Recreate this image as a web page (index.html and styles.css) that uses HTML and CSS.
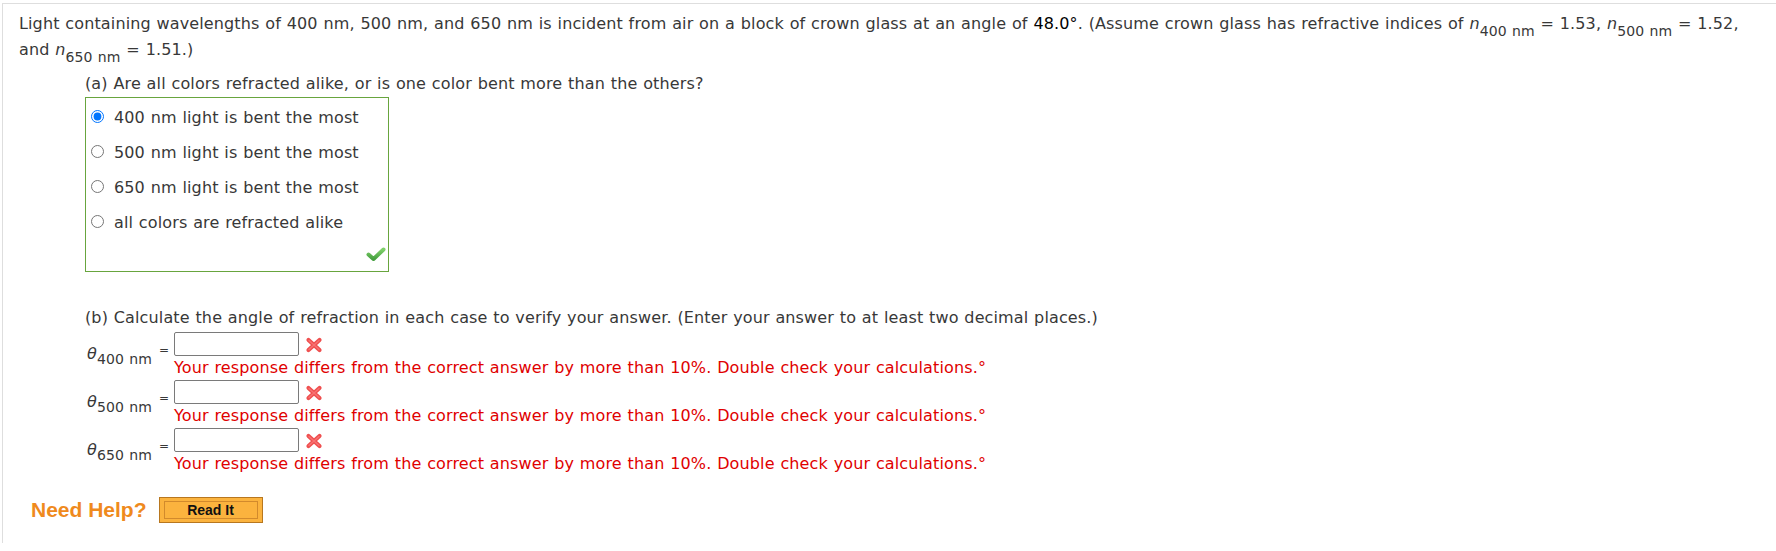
FILE: index.html
```html
<!DOCTYPE html>
<html>
<head>
<meta charset="utf-8">
<link rel="stylesheet" href="styles.css">
</head>
<body>
<div class="page">
  <p class="stem">Light containing wavelengths of 400 nm, 500 nm, and 650 nm is incident from air on a block of crown glass at an angle of <span class="val">48.0°</span>. (Assume crown glass has refractive indices of <i class="var">n</i><sub>400 nm</sub> = 1.53, <i class="var">n</i><sub>500 nm</sub> = 1.52,<br>and <i class="var">n</i><sub>650 nm</sub> = 1.51.)</p>

  <div class="part part-a">
    <p class="q">(a) Are all colors refracted alike, or is one color bent more than the others?</p>
    <div class="choices">
      <label class="choice"><input type="radio" name="a" checked><span>400 nm light is bent the most</span></label>
      <label class="choice"><input type="radio" name="a"><span>500 nm light is bent the most</span></label>
      <label class="choice"><input type="radio" name="a"><span>650 nm light is bent the most</span></label>
      <label class="choice"><input type="radio" name="a"><span>all colors are refracted alike</span></label>
      <div class="choices-foot">
        <svg class="check" width="20" height="14" viewBox="0 0 20 14">
          <defs>
            <linearGradient id="cg" x1="0" y1="0" x2="0" y2="1">
              <stop offset="0" stop-color="#7fd06a"/>
              <stop offset="1" stop-color="#46a040"/>
            </linearGradient>
          </defs>
          <path d="M2.5 7.5 L7.5 12 L17.5 2.5" fill="none" stroke="url(#cg)" stroke-width="4" stroke-linecap="round" stroke-linejoin="round"/>
        </svg>
      </div>
    </div>
  </div>

  <div class="part part-b">
    <p class="q">(b) Calculate the angle of refraction in each case to verify your answer. (Enter your answer to at least two decimal places.)</p>

    <div class="ans-row">
      <div class="ans-label"><i class="theta">θ</i><sub>400 nm</sub><span class="eq">=</span></div>
      <div class="ans-col">
        <div class="ans-input"><input type="text" class="box"><svg class="cross" width="18" height="16" viewBox="0 0 18 16"><path d="M3.5 3 L14.5 13 M14.5 3 L3.5 13" stroke="#ef4f4f" stroke-width="4.2" stroke-linecap="round"/><path d="M4 3.4 L14 12.6 M14 3.4 L4 12.6" stroke="#ff8a8a" stroke-width="1.4" stroke-linecap="round" opacity="0.6"/></svg></div>
        <div class="msg">Your response differs from the correct answer by more than 10%. Double check your calculations.°</div>
      </div>
    </div>

    <div class="ans-row">
      <div class="ans-label"><i class="theta">θ</i><sub>500 nm</sub><span class="eq">=</span></div>
      <div class="ans-col">
        <div class="ans-input"><input type="text" class="box"><svg class="cross" width="18" height="16" viewBox="0 0 18 16"><path d="M3.5 3 L14.5 13 M14.5 3 L3.5 13" stroke="#ef4f4f" stroke-width="4.2" stroke-linecap="round"/><path d="M4 3.4 L14 12.6 M14 3.4 L4 12.6" stroke="#ff8a8a" stroke-width="1.4" stroke-linecap="round" opacity="0.6"/></svg></div>
        <div class="msg">Your response differs from the correct answer by more than 10%. Double check your calculations.°</div>
      </div>
    </div>

    <div class="ans-row">
      <div class="ans-label"><i class="theta">θ</i><sub>650 nm</sub><span class="eq">=</span></div>
      <div class="ans-col">
        <div class="ans-input"><input type="text" class="box"><svg class="cross" width="18" height="16" viewBox="0 0 18 16"><path d="M3.5 3 L14.5 13 M14.5 3 L3.5 13" stroke="#ef4f4f" stroke-width="4.2" stroke-linecap="round"/><path d="M4 3.4 L14 12.6 M14 3.4 L4 12.6" stroke="#ff8a8a" stroke-width="1.4" stroke-linecap="round" opacity="0.6"/></svg></div>
        <div class="msg">Your response differs from the correct answer by more than 10%. Double check your calculations.°</div>
      </div>
    </div>
  </div>

  <div class="help">
    <span class="need">Need Help?</span>
    <button class="read" type="button"><span class="read-inner">Read It</span></button>
  </div>
</div>
</body>
</html>
```

FILE: styles.css
```css
html, body {
  margin: 0;
  padding: 0;
  background: #fff;
}

body {
  font-family: "DejaVu Sans", Verdana, sans-serif;
  font-size: 16px;
  color: #383838;
  letter-spacing: 0.13px;
  word-spacing: 0.55px;
}

.page {
  margin: 3px 0 0 2px;
  border-top: 1px solid #dedede;
  border-left: 1px solid #dedede;
  padding: 7px 0 0 16px;
  min-height: 540px;
  box-sizing: border-box;
}

p {
  margin: 0;
}

.stem {
  line-height: 26px;
  white-space: nowrap;
}

.val {
  color: #000;
}

.var, .theta {
  font-style: italic;
}

sub {
  font-size: 14px;
  vertical-align: -7px;
  line-height: 0;
}

.part {
  margin-left: 66px;
}

.q {
  line-height: 20px;
}

.part-a .q {
  margin-top: 11px;
}

.choices {
  margin-top: 3px;
  width: 304px;
  height: 175px;
  box-sizing: border-box;
  border: 1px solid #68a53e;
  padding-top: 3px;
  display: flex;
  flex-direction: column;
}

.choice {
  display: flex;
  align-items: center;
  height: 34.8px;
  line-height: 20px;
}

.choice input {
  margin: 0 10px 3px 5px;
  width: 13px;
  height: 13px;
}

.choices-foot {
  flex: 1;
  display: flex;
  justify-content: flex-end;
  align-items: flex-start;
  padding: 7px 2px 0 0;
}

.part-b .q {
  margin-top: 36px;
}

.ans-row {
  display: flex;
  align-items: center;
  margin-top: 3px;
}

.part-b .q + .ans-row {
  margin-top: 4px;
}

.ans-label {
  line-height: 20px;
  white-space: nowrap;
  width: 89px;
  padding-left: 2px;
  box-sizing: border-box;
}

.ans-label sub {
  font-size: 14px;
  vertical-align: -5px;
}

.eq {
  font-size: 12px;
  margin-left: 7px;
  position: relative;
  top: -5px;
}

.ans-col {
  display: flex;
  flex-direction: column;
}

.ans-input {
  height: 26px;
  display: flex;
  align-items: flex-start;
}

.box {
  width: 125px;
  height: 24px;
  box-sizing: border-box;
  border: 1px solid #7a7a7a;
  border-radius: 2px;
  margin: 0;
  padding: 0 4px;
  font: inherit;
}

.cross {
  margin: 5px 0 0 6px;
}

.msg {
  color: #e00000;
  line-height: 19px;
  white-space: nowrap;
}

.help {
  display: flex;
  align-items: center;
  height: 26px;
  margin-top: 24px;
  padding-left: 12px;
  letter-spacing: normal;
  word-spacing: normal;
}

.need {
  font-family: "Liberation Sans", Arial, sans-serif;
  font-weight: bold;
  font-size: 21px;
  color: #ef8a1d;
  margin-right: 12px;
}

.read {
  width: 104px;
  height: 26px;
  box-sizing: border-box;
  border: 1px solid #b8771f;
  background: #fbb33e;
  padding: 3px 4px;
  margin: 0;
  cursor: pointer;
}

.read-inner {
  display: block;
  height: 100%;
  box-sizing: border-box;
  border: 1px solid #d28a2c;
  font-family: "Liberation Sans", Arial, sans-serif;
  font-weight: bold;
  font-size: 14px;
  line-height: 16px;
  color: #111;
}
```
